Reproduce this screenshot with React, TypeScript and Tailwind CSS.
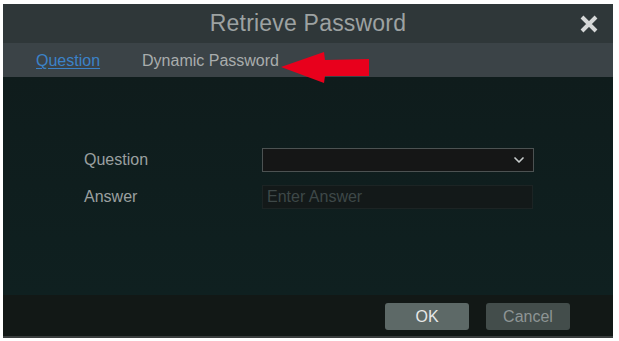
import { ChevronDown } from "lucide-react";

export default function App() {
  return (
    <div className="w-[619px] h-[341px] bg-white pt-[4px] pl-[3px] font-['Liberation_Sans',Arial,sans-serif]">
      <div className="relative w-[610px] h-[334px] flex flex-col border-b-2 border-[#3a3e3e]">
        {/* Title bar */}
        <div className="h-[39px] bg-[#2f3739] flex items-center justify-center relative">
          <span className="text-[23px] tracking-[0.2px] text-[#9da2a2]">Retrieve Password</span>
          <svg className="absolute right-[14px] top-[10px]" width="20" height="20" viewBox="0 0 20 20">
            <path d="M3 3 L17 17 M17 3 L3 17" stroke="#d6d8d8" strokeWidth="4" strokeLinecap="butt" />
          </svg>
        </div>

        {/* Tabs */}
        <div className="h-[34px] bg-[#3b4347] flex items-center text-[16px] pl-[33px] gap-[42px] pt-[2px]">
          <span className="text-[#3b82c8] underline underline-offset-2">Question</span>
          <span className="text-[#a9adad]">Dynamic Password</span>
        </div>

        {/* Body */}
        <div className="flex-1 bg-gradient-to-b from-[#0f1c1c] to-[#0f2020] pt-[71px]">
          <div className="flex items-center h-[24px] pl-[81px]">
            <span className="w-[178px] text-[16px] text-[#9ba0a0]">Question</span>
            <div className="w-[272px] h-[24px] bg-[#151616] border border-[#4c5252] flex items-center justify-end pr-[6px]">
              <ChevronDown className="w-4 h-4 text-[#c8cccc]" strokeWidth={2.5} />
            </div>
          </div>
          <div className="flex items-center h-[24px] pl-[81px] mt-[13px]">
            <span className="w-[178px] text-[16px] text-[#9ba0a0]">Answer</span>
            <div className="w-[271px] h-[24px] bg-[#131919] border border-[#1c2424] flex items-center pl-[4px]">
              <span className="text-[16px] text-[#3e4848]">Enter Answer</span>
            </div>
          </div>
        </div>

        {/* Footer */}
        <div className="h-[41px] bg-[#121816] flex items-center justify-end gap-[17px] pr-[43px] pt-[2px]">
          <button className="w-[84px] h-[27px] rounded-[3px] bg-[#5d6967] text-[16px] text-[#e6e8e8]">OK</button>
          <button className="w-[84px] h-[27px] rounded-[3px] bg-[#434d4b] text-[16px] text-[#8e9595]">Cancel</button>
        </div>

        {/* Red arrow annotation */}
        <svg className="absolute left-[275px] top-[46px]" width="92" height="34" viewBox="275 46 92 34">
          <polygon points="278,63 321,48 322,56 366,55 366,72 322,72 321,79" fill="#e8001c" />
        </svg>
      </div>
    </div>
  );
}
